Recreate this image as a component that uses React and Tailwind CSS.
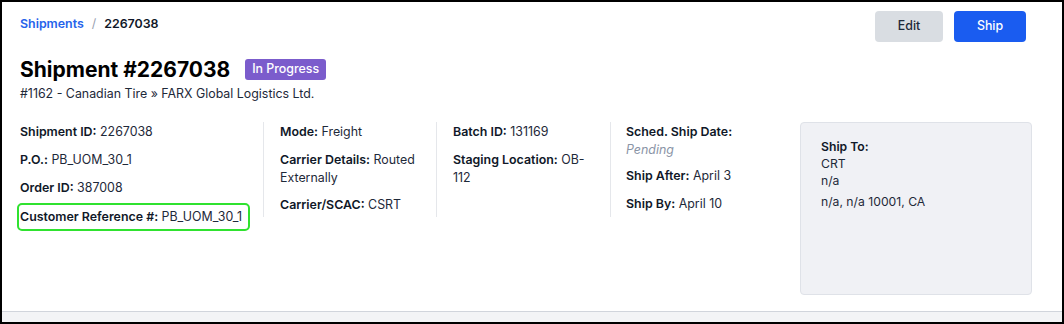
const left = [
  { label: 'Shipment ID:', value: '2267038' },
  { label: 'P.O.:', value: 'PB_UOM_30_1' },
  { label: 'Order ID:', value: '387008' },
];

const Field = ({ label, value, className = '' }) => (
  <div className={`leading-[18px] ${className}`}>
    <span className="font-semibold text-gray-900">{label}</span>{' '}
    <span className="text-gray-800">{value}</span>
  </div>
);

export default function App() {
  return (
    <div
      className="w-[1064px] h-[324px] border-2 border-black bg-white flex flex-col overflow-hidden text-[12.4px] text-gray-900"
      style={{ fontFamily: 'Inter, "Noto Sans", sans-serif' }}
    >
      <div className="flex-1 px-[18px]">
        {/* header */}
        <div className="flex items-start justify-between">
          <div className="pt-[13px]">
            <nav className="flex items-center gap-2 font-semibold">
              <span className="text-[#2563eb]">Shipments</span>
              <span className="font-normal text-gray-400">/</span>
              <span className="text-gray-900">2267038</span>
            </nav>
            <div className="mt-[22px] flex items-center gap-[15px]">
              <h1 className="text-[21px] font-bold leading-7 text-black">Shipment #2267038</h1>
              <span className="rounded-[3px] bg-[#7b5ccc] px-[7px] py-[1px] text-[12.4px] font-medium text-white">
                In Progress
              </span>
            </div>
            <p className="mt-[1px] text-gray-800">#1162 - Canadian Tire » FARX Global Logistics Ltd.</p>
          </div>
          <div className="flex gap-[11px] pt-[9px] pr-[18px]">
            <button className="h-[31px] w-[68px] rounded bg-[#d9dde2] font-medium text-gray-800">Edit</button>
            <button className="h-[31px] w-[72px] rounded bg-[#1a5cf0] font-medium text-white">Ship</button>
          </div>
        </div>

        {/* details */}
        <div className="mt-[19px] flex items-start">
          <div className="w-[243px] pt-[1px]">
            {left.map((f) => (
              <Field key={f.label} {...f} className="mb-[10px]" />
            ))}
            <div className="-ml-[3px] -mt-[4px] w-[233px] whitespace-nowrap rounded-[5px] border-2 border-[#2fe22f] px-[1px] py-[3px]">
              <Field label="Customer Reference #:" value="PB_UOM_30_1" />
            </div>
          </div>

          <div className="flex items-stretch">
            <div className="w-[173px] border-l border-gray-200 pl-[16px] pr-[14px] pt-[1px] pb-[3px]">
              <Field label="Mode:" value="Freight" className="mb-[10px]" />
              <Field label="Carrier Details:" value="Routed Externally" className="mb-[9px]" />
              <Field label="Carrier/SCAC:" value="CSRT" />
            </div>
            <div className="w-[174px] border-l border-gray-200 pl-[16px] pr-[16px] pt-[1px]">
              <Field label="Batch ID:" value="131169" className="mb-[10px]" />
              <Field label="Staging Location:" value="OB-112" />
            </div>
            <div className="w-[174px] border-l border-gray-200 pl-[15px] pt-[1px]">
              <div className="leading-[18px] font-semibold">Sched. Ship Date:</div>
              <div className="leading-[18px] italic text-[#8a94a6]">Pending</div>
              <Field label="Ship After:" value="April 3" className="mt-[8px] mb-[10px]" />
              <Field label="Ship By:" value="April 10" />
            </div>
          </div>

          <div className="ml-[16px] h-[173px] w-[232px] rounded border border-[#dfe2e8] bg-[#f0f1f5] px-[20px] pt-[15px] text-[12.2px] leading-[17px]">
            <div className="font-semibold">Ship To:</div>
            <div className="text-gray-800">CRT</div>
            <div className="text-gray-800">n/a</div>
            <div className="mt-1 text-gray-800">n/a, n/a 10001, CA</div>
          </div>
        </div>
      </div>

      <div className="h-[11px] border-t border-gray-300 bg-gray-100" />
    </div>
  );
}
